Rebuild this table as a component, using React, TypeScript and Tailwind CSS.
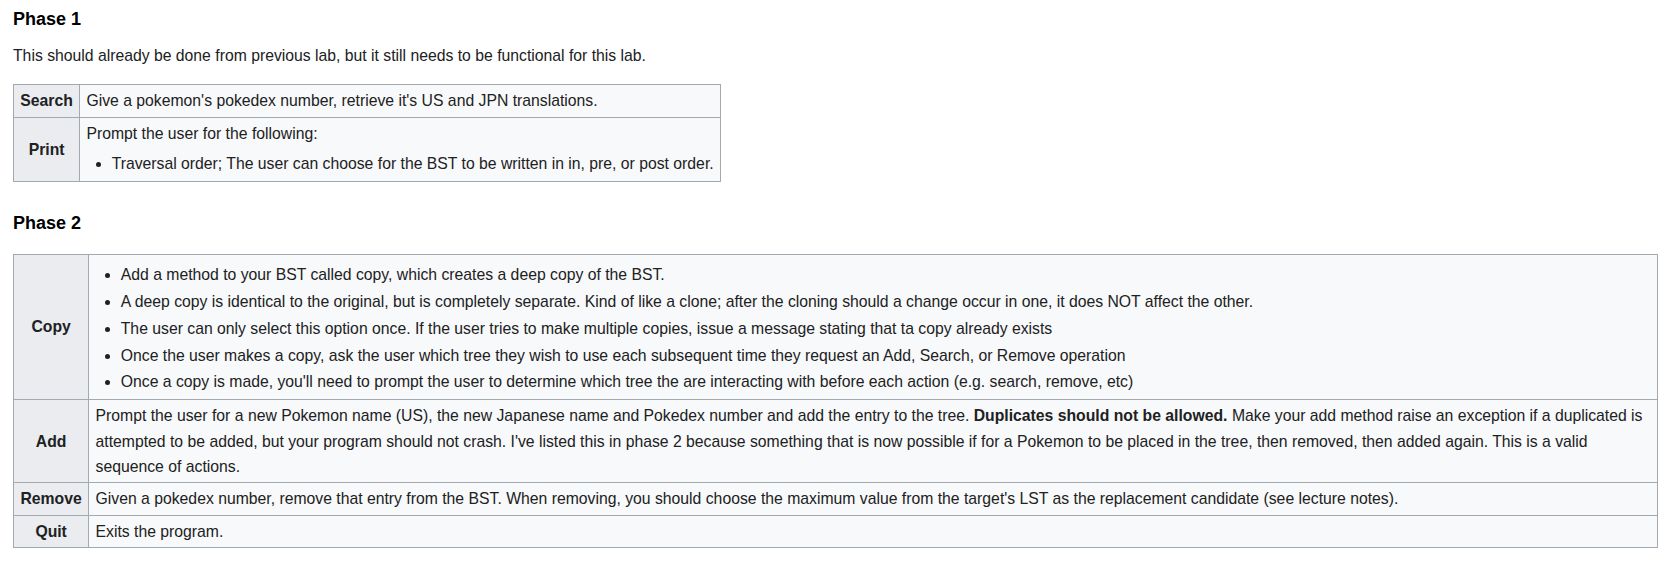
import React from "react";

const th = "border border-[#a2a9b1] bg-[#eaecf0] px-[0.4em] py-[0.2em] text-center align-middle font-bold";
const td = "border border-[#a2a9b1] bg-[#f8f9fa] px-[0.4em] py-[0.2em] text-left align-middle";

function Bullets({ items }: { items: string[] }) {
    return (
        <ul className="mt-[0.3em] ml-[1.6em] list-disc">
            {items.map((item) => (
                <li key={item} className="mb-[0.1em]">
                    {item}
                </li>
            ))}
        </ul>
    );
}

const copyItems = [
    "Add a method to your BST called copy, which creates a deep copy of the BST.",
    "A deep copy is identical to the original, but is completely separate. Kind of like a clone; after the cloning should a change occur in one, it does NOT affect the other.",
    "The user can only select this option once. If the user tries to make multiple copies, issue a message stating that ta copy already exists",
    "Once the user makes a copy, ask the user which tree they wish to use each subsequent time they request an Add, Search, or Remove operation",
    "Once a copy is made, you'll need to prompt the user to determine which tree the are interacting with before each action (e.g. search, remove, etc)",
];

export default function App() {
    return (
        <div className="min-h-[568px] bg-white pl-[13px] pr-[5px] font-['Liberation_Sans',Arial,sans-serif] text-[15.75px] leading-[1.6] text-[#202122]">
            <h3 className="pt-[5px] text-[18px] font-bold leading-[28px] text-black">Phase 1</h3>
            <p className="mt-[10px] mb-[16px]">
                This should already be done from previous lab, but it still needs to be functional for this lab.
            </p>

            <table className="border-collapse border border-[#a2a9b1]">
                <tbody>
                    <tr>
                        <th className={th}>Search</th>
                        <td className={td}>Give a pokemon's pokedex number, retrieve it's US and JPN translations.</td>
                    </tr>
                    <tr>
                        <th className={th}>Print</th>
                        <td className={td}>
                            Prompt the user for the following:
                            <Bullets items={["Traversal order; The user can choose for the BST to be written in in, pre, or post order."]} />
                        </td>
                    </tr>
                </tbody>
            </table>

            <h3 className="mt-[27px] text-[18px] font-bold leading-[28px] text-black">Phase 2</h3>

            <table className="mt-[17px] w-full border-collapse border border-[#a2a9b1]">
                <tbody>
                    <tr>
                        <th className={th}>Copy</th>
                        <td className={td}>
                            <Bullets items={copyItems} />
                        </td>
                    </tr>
                    <tr>
                        <th className={th}>Add</th>
                        <td className={td}>
                            Prompt the user for a new Pokemon name (US), the new Japanese name and Pokedex number and add the entry to the tree.{" "}
                            <b>Duplicates should not be allowed.</b> Make your add method raise an exception if a duplicated is
                            <br />
                            attempted to be added, but your program should not crash. I've listed this in phase 2 because something that is now
                            possible if for a Pokemon to be placed in the tree, then removed, then added again. This is a valid
                            <br />
                            sequence of actions.
                        </td>
                    </tr>
                    <tr>
                        <th className={th}>Remove</th>
                        <td className={td}>
                            Given a pokedex number, remove that entry from the BST. When removing, you should choose the maximum value from the
                            target's LST as the replacement candidate (see lecture notes).
                        </td>
                    </tr>
                    <tr>
                        <th className={th}>Quit</th>
                        <td className={td}>Exits the program.</td>
                    </tr>
                </tbody>
            </table>
        </div>
    );
}
